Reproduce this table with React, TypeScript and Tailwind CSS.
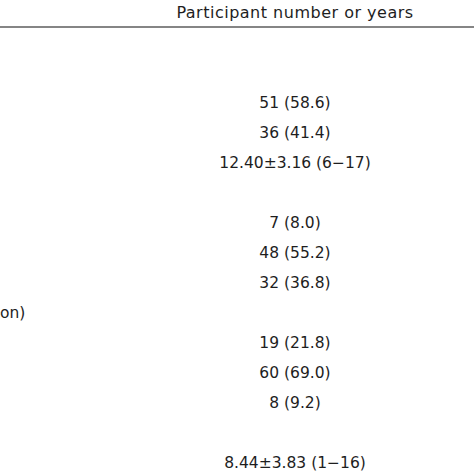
const rows: { label?: string; value?: string }[] = [
  {},
  {},
  { value: '51 (58.6)' },
  { value: '36 (41.4)' },
  { value: '12.40\u00b13.16 (6\u221217)' },
  {},
  { value: '7 (8.0)' },
  { value: '48 (55.2)' },
  { value: '32 (36.8)' },
  { label: 'on)' },
  { value: '19 (21.8)' },
  { value: '60 (69.0)' },
  { value: '8 (9.2)' },
  {},
  { value: '8.44\u00b13.83 (1\u221216)' },
];

export default function App() {
  return (
    <div className="w-[474px] h-[474px] overflow-hidden bg-white text-[#1e1e1e] font-['DejaVu_Sans',sans-serif] text-[15.5px]">
      {/* header */}
      <div className="grid grid-cols-[116px_1fr] h-[28px] items-center border-b-2 border-[#858585]">
        <div />
        <div className="text-center text-[16px] tracking-[0.5px]">Participant number or years</div>
      </div>
      <div className="pt-[1px]">
        {rows.map((row, i) => (
          <div key={i} className="grid grid-cols-[116px_1fr] h-[30px] items-center">
            <div className="whitespace-nowrap">{row.label}</div>
            <div className="text-center whitespace-nowrap">{row.value}</div>
          </div>
        ))}
      </div>
    </div>
  );
}
